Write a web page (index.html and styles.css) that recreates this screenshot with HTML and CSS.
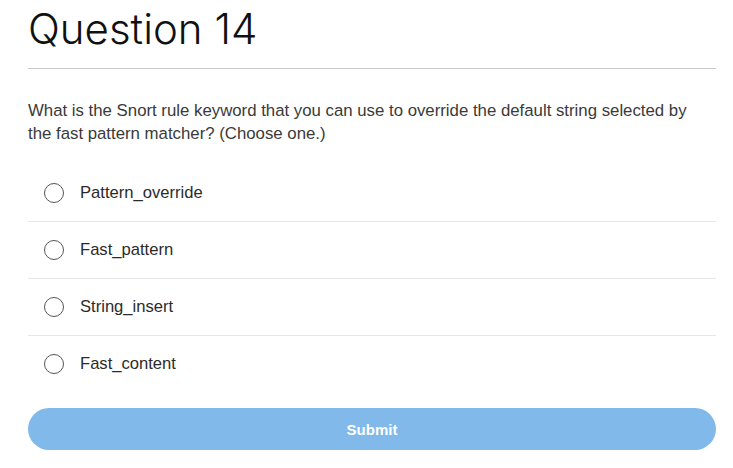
FILE: index.html
```html
<!DOCTYPE html>
<html>
<head>
<meta charset="utf-8">
<link rel="stylesheet" href="styles.css">
</head>
<body>
<div class="page">
  <h1 class="title">Question 14</h1>
  <div class="rule"></div>
  <p class="question">What is the Snort rule keyword that you can use to override the default string selected by the fast pattern matcher? (Choose one.)</p>
  <ul class="options">
    <li class="option"><span class="radio"></span><span class="label">Pattern_override</span></li>
    <li class="option"><span class="radio"></span><span class="label">Fast_pattern</span></li>
    <li class="option"><span class="radio"></span><span class="label">String_insert</span></li>
    <li class="option"><span class="radio"></span><span class="label">Fast_content</span></li>
  </ul>
  <button class="submit">Submit</button>
</div>
</body>
</html>
```
FILE: styles.css
```css
html, body {
  margin: 0;
  padding: 0;
  background: #fff;
}
.page {
  padding: 0 17px 0 28px;
  font-family: "Liberation Sans", Arial, sans-serif;
  color: #3a3a3a;
  display: flex;
  flex-direction: column;
}
.title {
  margin: 0;
  padding-top: 5px;
  font-family: Inter, "Noto Sans", sans-serif;
  font-weight: 300;
  font-size: 42px;
  line-height: 48px;
  color: #111;
  letter-spacing: 0;
}
.rule {
  margin-top: 15px;
  height: 1px;
  background: #c8c8c8;
}
.question {
  margin: 30px 20px 0 0;
  font-size: 16.8px;
  line-height: 23px;
  color: #3a3a3a;
}
.options {
  list-style: none;
  margin: 20px 0 0;
  padding: 0;
}
.option {
  display: flex;
  align-items: center;
  height: 56px;
  border-bottom: 1px solid #e6e6e6;
  padding-left: 16px;
}
.option:last-child {
  border-bottom: none;
}
.radio {
  width: 20px;
  height: 20px;
  border: 1.5px solid #555;
  border-radius: 50%;
  box-sizing: border-box;
  flex: none;
}
.label {
  margin-left: 16px;
  font-size: 16.6px;
  color: #2b2b2b;
}
.submit {
  margin-top: 16px;
  height: 42px;
  border: none;
  border-radius: 21px;
  background: #80b9ea;
  color: #fff;
  font-family: "Liberation Sans", Arial, sans-serif;
  font-weight: 700;
  font-size: 15px;
  cursor: pointer;
}
```
